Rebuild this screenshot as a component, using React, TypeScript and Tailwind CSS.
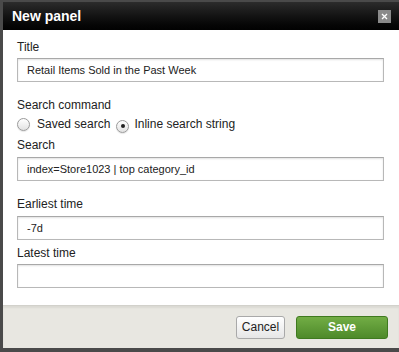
import React from "react";

const font = { fontFamily: '"Liberation Sans", Arial, Helvetica, sans-serif' };

function Field({ value, className = "" }: { value?: string; className?: string }) {
  return (
    <div
      className={`h-[24px] w-[367px] border border-[#b8b8b8] border-t-[#a8a8a8] bg-white shadow-[inset_0_1px_2px_rgba(0,0,0,0.12)] flex items-center pl-[9px] text-[11px] text-[#222] ${className}`}
    >
      {value}
    </div>
  );
}

function Radio({ checked }: { checked?: boolean }) {
  return (
    <span className="inline-flex h-[13px] w-[13px] items-center justify-center rounded-full border border-[#9a9a9a] bg-gradient-to-b from-[#ffffff] to-[#e2e2e2] shadow-[0_1px_1px_rgba(0,0,0,0.1)]">
      {checked && <span className="h-[4px] w-[4px] rounded-full bg-[#222]" />}
    </span>
  );
}

export default function App() {
  return (
    <div style={font} className="w-[399px] h-[352px] bg-[#4a4a4a] pl-[3px] pt-[2px] pb-[4px] flex flex-col overflow-hidden">
      <div className="h-[28px] shrink-0 bg-gradient-to-b from-[#2c2c2c] to-[#020202] flex items-center justify-between pl-[9px] pr-[8px]">
        <span className="text-white font-bold text-[14px] leading-none">New panel</span>
        <span className="h-[13px] w-[13px] bg-[#8a8a8a] flex items-center justify-center">
          <svg width="7" height="7" viewBox="0 0 7 7">
            <path d="M1 1 L6 6 M6 1 L1 6" stroke="#fff" strokeWidth="1.3" />
          </svg>
        </span>
      </div>
      <div className="flex-1 bg-white pl-[14px] pt-[9px] flex flex-col text-[12px] text-[#222]">
        <div className="h-[16px] leading-[16px]">Title</div>
        <Field value="Retail Items Sold in the Past Week" className="mt-[3px]" />
        <div className="h-[16px] leading-[16px] mt-[15px]">Search command</div>
        <div className="h-[16px] mt-[3px] flex items-center">
          <Radio />
          <span className="ml-[7px]">Saved search</span>
          <span className="ml-[6px]"><Radio checked /></span>
          <span className="ml-[5px]">Inline search string</span>
        </div>
        <div className="h-[16px] leading-[16px] mt-[5px]">Search</div>
        <Field value="index=Store1023 | top category_id" className="mt-[4px]" />
        <div className="h-[16px] leading-[16px] mt-[15px]">Earliest time</div>
        <Field value="-7d" className="mt-[4px]" />
        <div className="h-[16px] leading-[16px] mt-[5px]">Latest time</div>
        <Field className="mt-[3px]" />
      </div>
      <div className="h-[43px] shrink-0 bg-[#e8e7e1] border-t border-[#d2d1cb] shadow-[inset_0_2px_2px_rgba(0,0,0,0.06)] flex items-center justify-end pr-[11px] gap-[11px]">
        <button className="h-[23px] w-[49px] rounded-[3px] border border-[#a9a9a9] bg-gradient-to-b from-[#ffffff] to-[#e6e6e6] text-[12px] text-[#222]">
          Cancel
        </button>
        <button className="h-[23px] w-[92px] rounded-[3px] border border-[#3f7a1f] bg-gradient-to-b from-[#72ad45] to-[#4e8a2a] text-[12px] font-bold text-white">
          Save
        </button>
      </div>
    </div>
  );
}
